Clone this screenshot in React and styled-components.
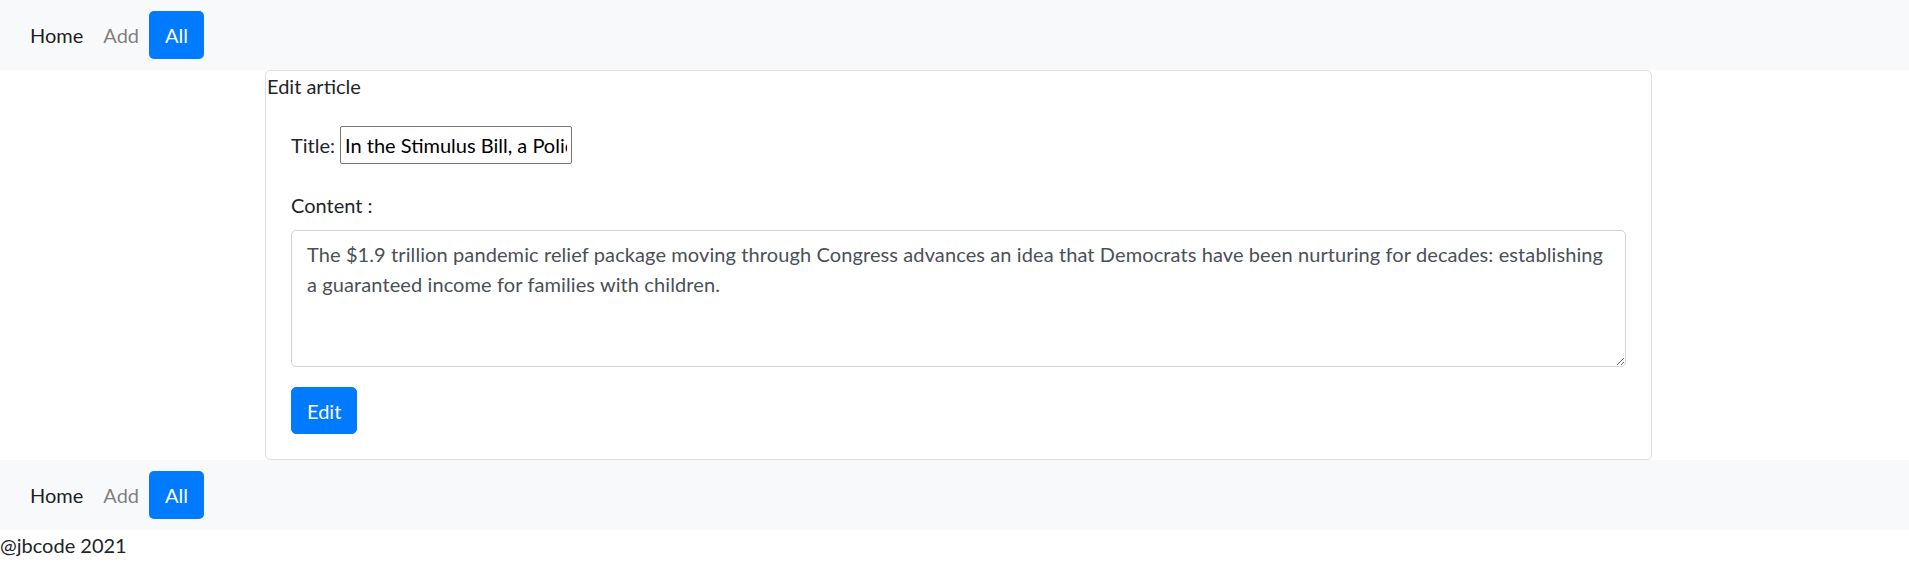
import React from 'react';
import styled, { createGlobalStyle } from 'styled-components';

const GlobalStyle = createGlobalStyle`
  body {
    margin: 0;
    font-family: Lato, "Noto Sans", sans-serif;
    font-size: 20px;
    line-height: 30px;
    color: #212529;
    background: #fff;
  }
`;

const NavbarWrapper = styled.nav`
  background-color: #f8f9fa;
  height: 70px;
  padding: 0 20px;
  display: flex;
  align-items: center;
  box-sizing: border-box;
`;

const NavbarMenu = styled.ul`
  list-style-type: none;
  display: flex;
  align-items: center;
  margin: 0;
  padding: 0;
`;

const NavbarLink = styled.a`
  display: block;
  padding: ${(p) => (p.$active ? '9px 16px' : '9px 10px')};
  border-radius: 5px;
  text-decoration: none;
  cursor: pointer;
  color: ${(p) => (p.$active ? '#fff' : p.$muted ? 'rgba(0, 0, 0, 0.5)' : 'rgba(0, 0, 0, 0.9)')};
  background-color: ${(p) => (p.$active ? '#007bff' : 'transparent')};
`;

const Container = styled.main`
  width: 1387px;
  margin-left: 265px;
`;

const Card = styled.section`
  border: 1px solid rgba(0, 0, 0, 0.125);
  border-radius: 5px;
`;

const CardTitle = styled.div`
  padding-left: 1px;
`;

const CardBody = styled.form`
  padding: 25px;
  display: flex;
  flex-direction: column;
  align-items: flex-start;
`;

const TitleRow = styled.div`
  display: flex;
  align-items: center;
  gap: 5px;
  height: 38px;
`;

const TitleInput = styled.input`
  width: 232px;
  height: 38px;
  box-sizing: border-box;
  padding: 2px 4px;
  font: inherit;
  color: #000;
  border: 1px solid #767676;
  border-radius: 2px;
`;

const Label = styled.label`
  display: block;
  margin: 26px 0 10px;
`;

const ContentArea = styled.textarea`
  width: 100%;
  height: 137px;
  box-sizing: border-box;
  padding: 7.5px 15px;
  font: inherit;
  letter-spacing: 0.1px;
  color: #495057;
  border: 1px solid #ced4da;
  border-radius: 5px;
`;

const EditButton = styled.button`
  margin-top: 20px;
  height: 47px;
  padding: 0 15px;
  font: inherit;
  color: #fff;
  background-color: #007bff;
  border: 1px solid #007bff;
  border-radius: 5px;
  cursor: pointer;
`;

const Footer = styled.footer`
  padding: 0;
`;

function Navbar() {
  return (
    <NavbarWrapper>
      <NavbarMenu>
        <li>
          <NavbarLink>Home</NavbarLink>
        </li>
        <li>
          <NavbarLink $muted>Add</NavbarLink>
        </li>
        <li>
          <NavbarLink $active>All</NavbarLink>
        </li>
      </NavbarMenu>
    </NavbarWrapper>
  );
}

export default function App() {
  return (
    <>
      <GlobalStyle />
      <Navbar />
      <Container>
        <Card>
          <CardTitle>Edit article</CardTitle>
          <CardBody onSubmit={(e) => e.preventDefault()}>
            <TitleRow>
              <label htmlFor="title">Title:</label>
              <TitleInput
                id="title"
                defaultValue="In the Stimulus Bill, a Policy That Could Slash Child Poverty"
              />
            </TitleRow>
            <Label htmlFor="content">Content :</Label>
            <ContentArea
              id="content"
              rows={4}
              defaultValue="The $1.9 trillion pandemic relief package moving through Congress advances an idea that Democrats have been nurturing for decades: establishing a guaranteed income for families with children."
            />
            <EditButton type="submit">Edit</EditButton>
          </CardBody>
        </Card>
      </Container>
      <Navbar />
      <Footer>@jbcode 2021</Footer>
    </>
  );
}
